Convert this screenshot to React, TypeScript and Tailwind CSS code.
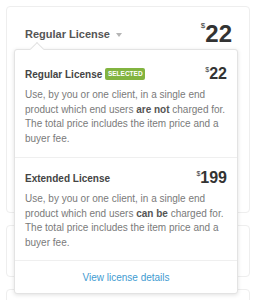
import React from "react";

const licenses = [
  {
    name: "Regular License",
    price: "22",
    selected: true,
    strong: "are not",
  },
  {
    name: "Extended License",
    price: "199",
    selected: false,
    strong: "can be",
  },
];

function Price({ value, big }: { value: string; big?: boolean }) {
  return (
    <div className="flex items-start text-[#333]">
      <span className={big ? "text-[8px] leading-none" : "text-[7px] leading-none"}>$</span>
      <span className={big ? "text-[24px] leading-none font-bold" : "text-[16px] leading-none font-bold"}>
        {value}
      </span>
    </div>
  );
}

export default function App() {
  return (
    <main
      className="bg-white pt-[6px] pl-[6px] pr-[7px] flex flex-col gap-[12px] overflow-hidden h-[300px]"
      style={{ fontFamily: '"Liberation Sans", Arial, sans-serif' }}
    >
      {/* LICENSE CARD */}
      <section className="relative h-[207px] shrink-0 rounded-[4px] border border-[#eeeeee] pt-[15px] pl-[18px] pr-[17px]">
        <div className="flex items-center justify-between">
          <div className="flex items-center gap-[6px]">
            <span className="text-[11px] font-bold text-[#555]">Regular License</span>
            <span className="w-0 h-0 border-l-[3px] border-r-[3px] border-t-[4px] border-l-transparent border-r-transparent border-t-[#b5b5b5] mt-[1px]" />
          </div>
          <Price value="22" big />
        </div>

        {/* DROPDOWN */}
        <div className="absolute left-[7px] top-[42px] z-10 w-[224px] rounded-[3px] border border-[#e3e3e3] bg-white shadow-[0_1px_4px_rgba(0,0,0,0.12)]">
          <span className="absolute left-[17px] -top-[6px] w-[10px] h-[10px] rotate-45 bg-white border-l border-t border-[#e3e3e3]" />

          {licenses.map((item, i) => (
            <div
              key={item.name}
              className={
                i === 0
                  ? "relative pt-[16px] pb-[11px] px-[10px] border-b border-[#efefef]"
                  : "relative pt-[12px] pb-[10px] px-[10px] border-b border-[#efefef]"
              }
            >
              <div className="flex items-center justify-between">
                <div className="flex items-center gap-[3px]">
                  <span className="text-[10px] font-bold text-[#444]">{item.name}</span>
                  {item.selected && (
                    <span className="h-[12px] w-[40px] whitespace-nowrap rounded-[2px] bg-[#82b440] text-white text-[6.5px] font-bold leading-[12px] text-center">
                      SELECTED
                    </span>
                  )}
                </div>
                <Price value={item.price} />
              </div>

              <p className="mt-[6px] text-[10px] leading-[14.5px] text-[#7a7a7a]">
                Use, by you or one client, in a single end product which end users{" "}
                <b className="text-[#555]">{item.strong}</b> charged for. The total price includes the item price and a
                buyer fee.
              </p>
            </div>
          ))}

          <div className="h-[32px] flex items-center justify-center">
            <a href="#" className="text-[10px] text-[#3f9bd1]">
              View license details
            </a>
          </div>
        </div>
      </section>

      {/* NEXT CARDS */}
      <section className="h-[52px] shrink-0 rounded-[4px] border border-[#eeeeee]" />
      <section className="h-[52px] shrink-0 rounded-[4px] border border-[#eeeeee]" />
    </main>
  );
}
